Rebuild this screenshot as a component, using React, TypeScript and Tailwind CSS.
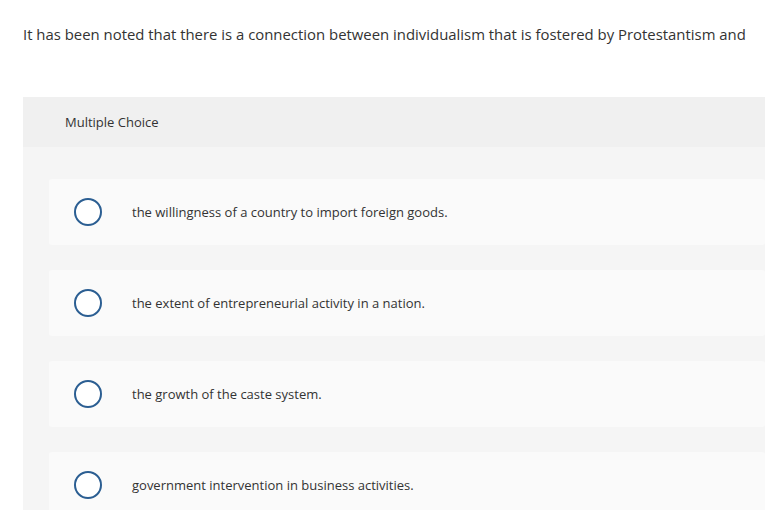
import React from "react";

const options = [
  "the willingness of a country to import foreign goods.",
  "the extent of entrepreneurial activity in a nation.",
  "the growth of the caste system.",
  "government intervention in business activities.",
];

export default function App() {
  return (
    <div
      className="w-[765px] h-[510px] overflow-hidden bg-white text-[#333]"
      style={{ fontFamily: '"Open Sans", "Liberation Sans", sans-serif' }}
    >
      <div className="pl-[23px] pt-[23px] h-[97px]">
        <p className="text-[14.9px] leading-[22px] whitespace-nowrap">
          It has been noted that there is a connection between individualism that is fostered by Protestantism and
        </p>
      </div>
      <div className="ml-[23px] bg-[#f5f5f5]">
        <div className="h-[50px] bg-[#f0f0f0] flex items-center pl-[42px] pt-[2px]">
          <span className="text-[13px]">Multiple Choice</span>
        </div>
        <div className="flex flex-col gap-[25px] pl-[26px] pt-[32px] pb-[20px]">
          {options.map((o) => (
            <div
              key={o}
              className="h-[66px] bg-[#fafafa] rounded-[3px] flex items-center"
            >
              <div className="ml-[25px] w-[28px] h-[28px] rounded-full border-2 border-[#2b5e92] bg-white shrink-0" />
              <span className="ml-[30px] pt-[2px] text-[13px] whitespace-nowrap">{o}</span>
            </div>
          ))}
        </div>
      </div>
    </div>
  );
}
